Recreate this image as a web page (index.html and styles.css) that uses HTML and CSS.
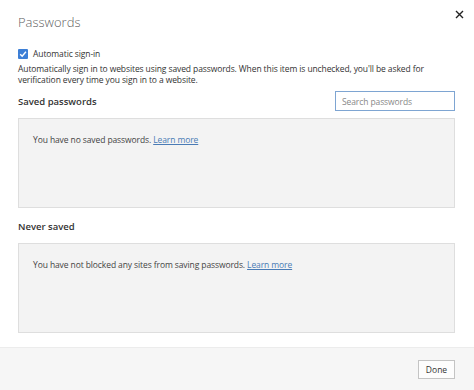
FILE: index.html
```html
<!DOCTYPE html>
<html lang="en">
<head>
    <meta charset="UTF-8">
    <meta name="viewport" content="width=device-width, initial-scale=1.0">
    <title>Passwords</title>
    <link rel="stylesheet" href="styles.css">
</head>
<body>
    <div class="dialog">
        <div class="header">
            <h1 class="title">Passwords</h1>
            <button class="close" aria-label="Close">
                <svg width="9" height="9" viewBox="0 0 9 9">
                    <path d="M1 1 L8 8 M8 1 L1 8" stroke="#222" stroke-width="1.4" fill="none"/>
                </svg>
            </button>
        </div>

        <div class="content">
            <label class="auto-signin">
                <svg class="check" width="10" height="10" viewBox="0 0 10 10">
                    <rect x="0" y="0" width="10" height="10" rx="1" fill="#3d7fd6"/>
                    <path d="M2.2 5.2 L4.2 7.2 L7.9 2.8" stroke="#fff" stroke-width="1.4" fill="none"/>
                </svg>
                Automatic sign-in
            </label>
            <p class="desc">Automatically sign in to websites using saved passwords. When this item is unchecked, you'll be asked for verification every time you sign in to a website.</p>

            <div class="section-head">
                <h2>Saved passwords</h2>
                <input type="text" class="search" placeholder="Search passwords">
            </div>
            <div class="box">
                You have no saved passwords. <a href="#">Learn more</a>
            </div>

            <div class="section-head">
                <h2>Never saved</h2>
            </div>
            <div class="box">
                You have not blocked any sites from saving passwords. <a href="#">Learn more</a>
            </div>
        </div>

        <div class="footer">
            <button class="done">Done</button>
        </div>
    </div>
</body>
</html>
```

FILE: styles.css
```css
body {
    font-family: "Open Sans", "Noto Sans", Arial, sans-serif;
    background: #fff;
    margin: 0;
    padding: 0;
    color: #333;
}
.dialog {
    width: 474px;
    height: 390px;
    display: flex;
    flex-direction: column;
}
.header {
    height: 44px;
    display: flex;
    justify-content: space-between;
    align-items: flex-start;
    padding: 0 10px 0 18px;
}
.title {
    margin: 12px 0 0 0;
    font-size: 13px;
    line-height: 20px;
    font-weight: 300;
    color: #5f5f5f;
}
.close {
    margin-top: 10px;
    padding: 0;
    border: none;
    background: none;
    width: 9px;
    height: 9px;
    display: flex;
    cursor: pointer;
}
.content {
    padding: 0 19px 0 18px;
}
.auto-signin {
    height: 19px;
    display: flex;
    align-items: center;
    gap: 5px;
    font-size: 8.5px;
    letter-spacing: -0.1px;
    color: #333;
}
.desc {
    margin: 0;
    font-size: 8.5px;
    letter-spacing: -0.1px;
    line-height: 11px;
    color: #333;
}
.section-head {
    min-height: 20px;
    margin-top: 6px;
    display: flex;
    justify-content: space-between;
    align-items: center;
}
.box + .section-head {
    margin-top: 8px;
}
.section-head h2 {
    margin: 0;
    font-size: 9.5px;
    font-weight: 600;
    color: #333;
}
.search {
    box-sizing: border-box;
    width: 120px;
    height: 20px;
    padding: 0 6px;
    border: 1px solid #7ea5d2;
    font-family: inherit;
    font-size: 8.5px;
    letter-spacing: -0.1px;
    outline: none;
}
.search::placeholder {
    color: #888;
}
.box {
    box-sizing: border-box;
    height: 90px;
    margin-top: 7px;
    padding: 15px 14px;
    background: #f3f3f3;
    border: 1px solid #dedede;
    font-size: 8.5px;
    letter-spacing: -0.1px;
    line-height: 12px;
    color: #444;
}
.box a {
    color: #4a7bb5;
}
.footer {
    margin-top: auto;
    height: 43px;
    box-sizing: border-box;
    padding: 12px 19px 0 0;
    background: #f6f6f6;
    border-top: 1px solid #ececec;
    display: flex;
    justify-content: flex-end;
    align-items: flex-start;
}
.done {
    width: 37px;
    height: 19px;
    padding: 0;
    font-family: inherit;
    font-size: 8.5px;
    color: #333;
    background: #fdfdfd;
    border: 1px solid #c4c4c4;
    cursor: pointer;
}
```
